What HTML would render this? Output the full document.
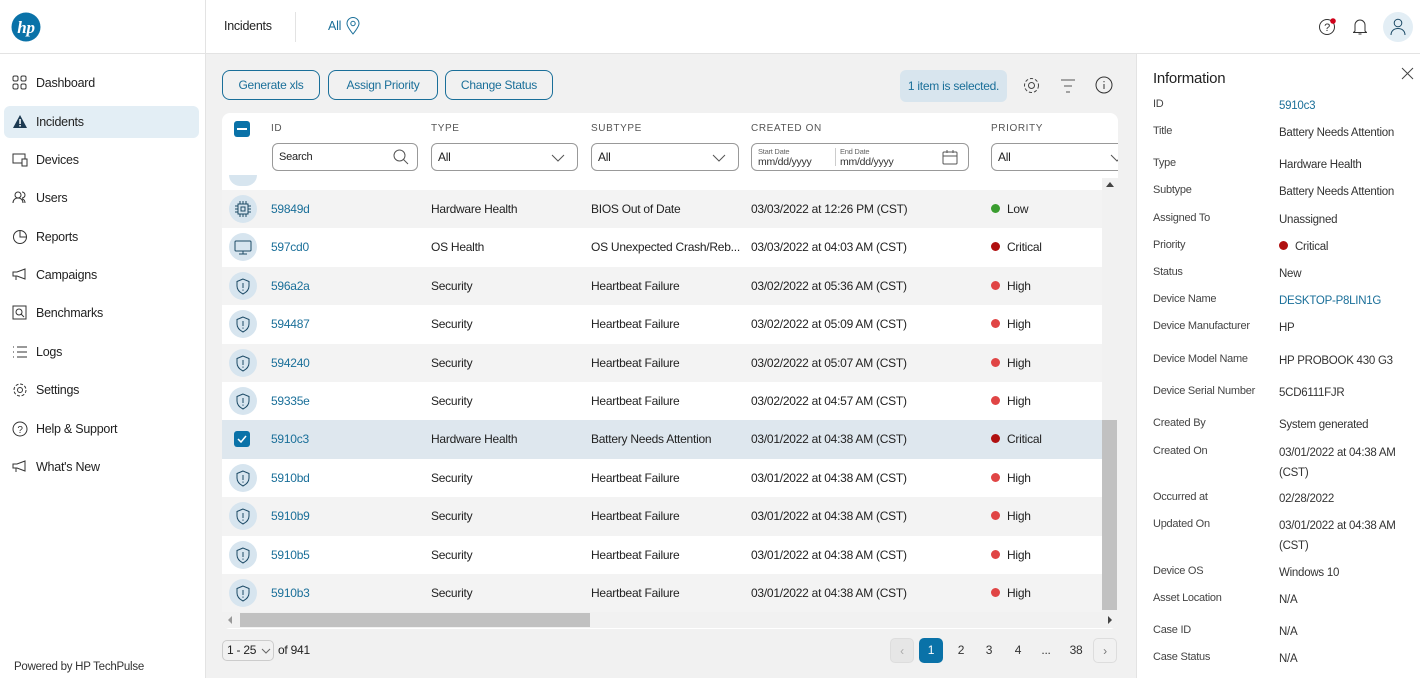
<!DOCTYPE html>
<html><head><meta charset="utf-8"><style>
*{box-sizing:border-box;margin:0;padding:0}
body{width:1420px;height:678px;overflow:hidden;font-family:"Liberation Sans",sans-serif;font-size:12px;letter-spacing:-0.25px;color:#222;background:#f1f1f1;position:relative}
.a{position:absolute}
.side{left:0;top:0;width:206px;height:678px;background:#fff;border-right:1px solid #e3e3e3}
.top{left:206px;top:0;width:1214px;height:54px;background:#fff;border-bottom:1px solid #e3e3e3}
.nav{position:absolute;left:12px;font-size:12.5px;color:#222;line-height:20px}
.nav svg{position:absolute;left:0;top:2px}
.nav span{position:absolute;left:24px;white-space:nowrap}
.btn{position:absolute;top:70px;height:30px;border:1px solid #1a6f99;border-radius:8px;color:#1a6f99;font-size:12px;text-align:center;line-height:28px;white-space:nowrap}
.card{left:222px;top:113px;width:896px;height:516px;background:#fff;border-radius:8px;overflow:hidden}
.hl{position:absolute;top:10px;font-size:10px;letter-spacing:.6px;color:#555}
.inp{position:absolute;top:30px;height:28px;border:1px solid #999;border-radius:6px;font-size:12px;padding-left:6px;line-height:26px;background:#fff}
.row{position:absolute;left:0;width:880px;height:38.4px;font-size:12px}
.row div{position:absolute;top:12px;white-space:nowrap}
.ic{left:7px!important;top:5px!important;width:28px;height:28px;border-radius:50%;background:#d7e5ef}
.id{left:49px;color:#1a6f99}
.c2{left:209px}.c3{left:369px}.c4{left:529px}.c5{left:769px}
.dot{display:inline-block;width:9px;height:9px;border-radius:50%;margin-right:7px;vertical-align:0}
.g{background:#f3f3f3}.w{background:#fff}.s{background:#dee7ee}
.info{left:1136px;top:54px;width:284px;height:624px;background:#fff;border-left:1px solid #e3e3e3}
.l{position:absolute;left:16px;font-size:11px;color:#444}
.v{position:absolute;left:142px;font-size:11.5px;color:#333;line-height:20px;width:122px}
.pg{position:absolute;top:638px;height:25px;width:24px;text-align:center;line-height:25px;font-size:12px;color:#333}
</style></head><body>
<div class="a side">
<svg class="a" style="left:11px;top:12px" width="30" height="30" viewBox="0 0 30 30"><circle cx="15" cy="15" r="14.5" fill="#0a72a8"/><text x="15" y="21" text-anchor="middle" font-family="Liberation Serif" font-style="italic" font-weight="bold" font-size="17" fill="#fff">hp</text></svg>
<div class="a" style="left:0;top:53px;width:205px;border-top:1px solid #e3e3e3"></div>
<div class="a" style="left:4px;top:106px;width:195px;height:32px;background:#e3eef5;border-radius:6px"></div>
<div class="nav" style="top:73px"><svg width="15" height="15" fill="none" stroke="#333"><rect x="1" y="1" width="5" height="5" rx="1.5"/><rect x="9" y="1" width="5" height="5" rx="1.5"/><rect x="1" y="9" width="5" height="5" rx="1.5"/><rect x="9" y="9" width="5" height="5" rx="1.5"/></svg><span>Dashboard</span></div>
<div class="nav" style="top:112px"><svg width="16" height="15"><path d="M8 1 L15 14 H1Z" fill="#1c3a52"/><rect x="7.3" y="5" width="1.5" height="5" fill="#fff"/><rect x="7.3" y="11" width="1.5" height="1.5" fill="#fff"/></svg><span>Incidents</span></div>
<div class="nav" style="top:150px"><svg width="16" height="15" fill="none" stroke="#333"><rect x="1" y="2" width="12" height="9"/><rect x="10" y="7" width="5" height="7" fill="#fff"/></svg><span>Devices</span></div>
<div class="nav" style="top:188px"><svg width="16" height="15" fill="none" stroke="#333"><circle cx="6" cy="5" r="3"/><path d="M1 13c0-3 2-5 5-5s5 2 5 5M10 2a3 3 0 010 6M13 13c0-2-1-4-3-4"/></svg><span>Users</span></div>
<div class="nav" style="top:227px"><svg width="16" height="16" fill="none" stroke="#333"><circle cx="8" cy="8" r="6.5"/><path d="M8 1.5V8H14.5"/></svg><span>Reports</span></div>
<div class="nav" style="top:265px"><svg width="16" height="15" fill="none" stroke="#333"><path d="M1 5h4l8-3v10l-8-3H1zM4 9v4"/></svg><span>Campaigns</span></div>
<div class="nav" style="top:303px"><svg width="16" height="16" fill="none" stroke="#333"><rect x="1" y="1" width="13" height="13"/><circle cx="7" cy="7" r="3"/><path d="M9 9l3 3"/></svg><span>Benchmarks</span></div>
<div class="nav" style="top:342px"><svg width="16" height="15" fill="none" stroke="#333"><path d="M1 3h1M5 3h10M1 8h1M5 8h10M1 13h1M5 13h10"/></svg><span>Logs</span></div>
<div class="nav" style="top:380px"><svg width="16" height="16" fill="none" stroke="#333"><circle cx="8" cy="8" r="2.5"/><circle cx="8" cy="8" r="6" stroke-dasharray="3 1.7"/></svg><span>Settings</span></div>
<div class="nav" style="top:419px"><svg width="16" height="16" fill="none" stroke="#333"><circle cx="8" cy="8" r="7"/><text x="8" y="12" text-anchor="middle" font-size="10" fill="#333" stroke="none">?</text></svg><span>Help &amp; Support</span></div>
<div class="nav" style="top:457px"><svg width="16" height="15" fill="none" stroke="#333"><path d="M1 5h4l8-3v10l-8-3H1zM4 9v4"/></svg><span>What's New</span></div>
<div class="a" style="left:14px;top:661px;font-size:11.5px;color:#333">Powered by HP TechPulse</div>
</div>
<div class="a top">
<div class="a" style="left:18px;top:19px;font-size:12.5px">Incidents</div>
<div class="a" style="left:89px;top:12px;height:30px;border-left:1px solid #e3e3e3"></div>
<div class="a" style="left:122px;top:19px;font-size:12.5px;color:#1a6f99">All</div>
<svg class="a" style="left:140px;top:17px" width="14" height="18" fill="none" stroke="#1a6f99"><path d="M7 17C3 12 1 9 1 6.5a6 6 0 0112 0C13 9 11 12 7 17z"/><circle cx="7" cy="6.5" r="2.2"/></svg>
<svg class="a" style="left:1112px;top:17px" width="20" height="20" fill="none" stroke="#333"><circle cx="9" cy="10" r="7.5"/><text x="9" y="14" text-anchor="middle" font-size="11" fill="#333" stroke="none">?</text><circle cx="15" cy="4" r="2.8" fill="#d0021b" stroke="none"/></svg>
<svg class="a" style="left:1147px;top:17px" width="14" height="19" fill="none" stroke="#333"><path d="M2 14V8a5 5 0 0110 0v6l1.5 1.5h-13zM5.5 17h3"/></svg>
<div class="a" style="left:1177px;top:12px;width:30px;height:30px;border-radius:50%;background:#e3eef5"></div>
<svg class="a" style="left:1183px;top:17px" width="18" height="20" fill="none" stroke="#1c4a66"><circle cx="9" cy="6" r="3.8"/><path d="M2 18c0-4 3-6.5 7-6.5s7 2.5 7 6.5"/></svg>
</div>
<div class="btn" style="left:222px;width:98px">Generate xls</div>
<div class="btn" style="left:328px;width:110px">Assign Priority</div>
<div class="btn" style="left:445px;width:108px">Change Status</div>
<div class="a" style="left:900px;top:70px;width:107px;height:32px;background:#d8e5ee;border-radius:6px;color:#1a6f99;font-size:12px;line-height:32px;text-align:center;white-space:nowrap">1 item is selected.</div>
<svg class="a" style="left:1022px;top:76px" width="19" height="19" fill="none" stroke="#444"><circle cx="9.5" cy="9.5" r="3"/><circle cx="9.5" cy="9.5" r="7" stroke-dasharray="3.2 2"/></svg>
<svg class="a" style="left:1060px;top:78px" width="16" height="16" stroke="#555"><path d="M1 2h14M4 8h8M6 14h4"/></svg>
<svg class="a" style="left:1095px;top:76px" width="18" height="18" fill="none" stroke="#333"><circle cx="9" cy="9" r="8"/><path d="M9 8v5M9 5v1.3"/></svg>
<div class="a card">
<div class="a" style="left:12px;top:8px;width:16px;height:16px;background:#0a72a8;border-radius:3px"><div class="a" style="left:3px;top:7px;width:10px;height:2px;background:#fff"></div></div>
<div class="hl" style="left:49px">ID</div><div class="hl" style="left:209px">TYPE</div><div class="hl" style="left:369px">SUBTYPE</div><div class="hl" style="left:529px">CREATED ON</div><div class="hl" style="left:769px">PRIORITY</div>
<div class="inp" style="left:50px;width:146px;font-size:11px">Search<svg class="a" style="right:8px;top:5px" width="16" height="16" fill="none" stroke="#555"><circle cx="6.5" cy="6.5" r="5.5"/><path d="M10.5 10.5l4.5 4.5"/></svg></div>
<div class="inp" style="left:209px;width:147px">All<svg class="a" style="right:12px;top:10px" width="14" height="8" fill="none" stroke="#555"><path d="M1 1l6 6 6-6"/></svg></div>
<div class="inp" style="left:369px;width:148px">All<svg class="a" style="right:12px;top:10px" width="14" height="8" fill="none" stroke="#555"><path d="M1 1l6 6 6-6"/></svg></div>
<div class="inp" style="left:529px;width:218px;line-height:11px;font-size:7.5px;color:#666;padding-top:2px">Start Date<br><span style="font-size:10.5px;color:#333">mm/dd/yyyy</span><div class="a" style="left:88px;top:2px;font-size:7.5px">End Date<br><span style="font-size:10.5px;color:#333">mm/dd/yyyy</span></div><div class="a" style="left:83px;top:4px;height:18px;border-left:1px solid #ccc"></div><svg class="a" style="right:10px;top:6px" width="16" height="15" fill="none" stroke="#555"><rect x="1" y="2" width="14" height="12" rx="1"/><path d="M1 6h14M5 0v3M11 0v3"/></svg></div>
<div class="inp" style="left:769px;width:140px">All<svg class="a" style="left:118px;top:10px" width="14" height="8" fill="none" stroke="#555"><path d="M1 1l6 6 6-6"/></svg></div>
<div class="a" style="left:7px;top:62px;width:28px;height:11px;border-radius:0 0 14px 14px;background:#d7e5ef"></div>

<div class="row g" style="top:77px"><div class="ic"></div><svg class="a" style="left:13px;top:11px" width="16" height="16" fill="none" stroke="#1c4a66"><rect x="3" y="3" width="10" height="10"/><rect x="6" y="6" width="4" height="4"/><path d="M5 0v3M8 0v3M11 0v3M5 13v3M8 13v3M11 13v3M0 5h3M0 8h3M0 11h3M13 5h3M13 8h3M13 11h3"/></svg><div class="id">59849d</div><div class="c2">Hardware Health</div><div class="c3">BIOS Out of Date</div><div class="c4">03/03/2022 at 12:26 PM (CST)</div><div class="c5"><span class="dot" style="background:#3a9d2f"></span>Low</div></div>
<div class="row w" style="top:115.4px"><div class="ic"></div><svg class="a" style="left:12px;top:12px" width="18" height="15" fill="none" stroke="#1c4a66"><rect x="1" y="1" width="16" height="10" rx="1"/><path d="M9 11v3M5 14h8"/></svg><div class="id">597cd0</div><div class="c2">OS Health</div><div class="c3">OS Unexpected Crash/Reb...</div><div class="c4">03/03/2022 at 04:03 AM (CST)</div><div class="c5"><span class="dot" style="background:#b01010"></span>Critical</div></div>
<div class="row g" style="top:153.8px"><div class="ic"></div><svg class="a" style="left:14px;top:11px" width="14" height="17" fill="none" stroke="#1c4a66"><path d="M7 1L1 3.5V8c0 4 3 6.5 6 8 3-1.5 6-4 6-8V3.5z"/><path d="M7 5v5M7 11.5v1.3"/></svg><div class="id">596a2a</div><div class="c2">Security</div><div class="c3">Heartbeat Failure</div><div class="c4">03/02/2022 at 05:36 AM (CST)</div><div class="c5"><span class="dot" style="background:#e04545"></span>High</div></div>
<div class="row w" style="top:192.2px"><div class="ic"></div><svg class="a" style="left:14px;top:11px" width="14" height="17" fill="none" stroke="#1c4a66"><path d="M7 1L1 3.5V8c0 4 3 6.5 6 8 3-1.5 6-4 6-8V3.5z"/><path d="M7 5v5M7 11.5v1.3"/></svg><div class="id">594487</div><div class="c2">Security</div><div class="c3">Heartbeat Failure</div><div class="c4">03/02/2022 at 05:09 AM (CST)</div><div class="c5"><span class="dot" style="background:#e04545"></span>High</div></div>
<div class="row g" style="top:230.6px"><div class="ic"></div><svg class="a" style="left:14px;top:11px" width="14" height="17" fill="none" stroke="#1c4a66"><path d="M7 1L1 3.5V8c0 4 3 6.5 6 8 3-1.5 6-4 6-8V3.5z"/><path d="M7 5v5M7 11.5v1.3"/></svg><div class="id">594240</div><div class="c2">Security</div><div class="c3">Heartbeat Failure</div><div class="c4">03/02/2022 at 05:07 AM (CST)</div><div class="c5"><span class="dot" style="background:#e04545"></span>High</div></div>
<div class="row w" style="top:269px"><div class="ic"></div><svg class="a" style="left:14px;top:11px" width="14" height="17" fill="none" stroke="#1c4a66"><path d="M7 1L1 3.5V8c0 4 3 6.5 6 8 3-1.5 6-4 6-8V3.5z"/><path d="M7 5v5M7 11.5v1.3"/></svg><div class="id">59335e</div><div class="c2">Security</div><div class="c3">Heartbeat Failure</div><div class="c4">03/02/2022 at 04:57 AM (CST)</div><div class="c5"><span class="dot" style="background:#e04545"></span>High</div></div>
<div class="row s" style="top:307.4px"><div class="a" style="left:12px!important;top:11px!important;width:16px;height:16px;background:#0a72a8;border-radius:3px"></div><svg class="a" style="left:15px;top:15px" width="10" height="8" fill="none" stroke="#fff" stroke-width="1.5"><path d="M1 4l3 3 5-6"/></svg><div class="id">5910c3</div><div class="c2">Hardware Health</div><div class="c3">Battery Needs Attention</div><div class="c4">03/01/2022 at 04:38 AM (CST)</div><div class="c5"><span class="dot" style="background:#b01010"></span>Critical</div></div>
<div class="row w" style="top:345.8px"><div class="ic"></div><svg class="a" style="left:14px;top:11px" width="14" height="17" fill="none" stroke="#1c4a66"><path d="M7 1L1 3.5V8c0 4 3 6.5 6 8 3-1.5 6-4 6-8V3.5z"/><path d="M7 5v5M7 11.5v1.3"/></svg><div class="id">5910bd</div><div class="c2">Security</div><div class="c3">Heartbeat Failure</div><div class="c4">03/01/2022 at 04:38 AM (CST)</div><div class="c5"><span class="dot" style="background:#e04545"></span>High</div></div>
<div class="row g" style="top:384.2px"><div class="ic"></div><svg class="a" style="left:14px;top:11px" width="14" height="17" fill="none" stroke="#1c4a66"><path d="M7 1L1 3.5V8c0 4 3 6.5 6 8 3-1.5 6-4 6-8V3.5z"/><path d="M7 5v5M7 11.5v1.3"/></svg><div class="id">5910b9</div><div class="c2">Security</div><div class="c3">Heartbeat Failure</div><div class="c4">03/01/2022 at 04:38 AM (CST)</div><div class="c5"><span class="dot" style="background:#e04545"></span>High</div></div>
<div class="row w" style="top:422.6px"><div class="ic"></div><svg class="a" style="left:14px;top:11px" width="14" height="17" fill="none" stroke="#1c4a66"><path d="M7 1L1 3.5V8c0 4 3 6.5 6 8 3-1.5 6-4 6-8V3.5z"/><path d="M7 5v5M7 11.5v1.3"/></svg><div class="id">5910b5</div><div class="c2">Security</div><div class="c3">Heartbeat Failure</div><div class="c4">03/01/2022 at 04:38 AM (CST)</div><div class="c5"><span class="dot" style="background:#e04545"></span>High</div></div>
<div class="row g" style="top:461px"><div class="ic"></div><svg class="a" style="left:14px;top:11px" width="14" height="17" fill="none" stroke="#1c4a66"><path d="M7 1L1 3.5V8c0 4 3 6.5 6 8 3-1.5 6-4 6-8V3.5z"/><path d="M7 5v5M7 11.5v1.3"/></svg><div class="id">5910b3</div><div class="c2">Security</div><div class="c3">Heartbeat Failure</div><div class="c4">03/01/2022 at 04:38 AM (CST)</div><div class="c5"><span class="dot" style="background:#e04545"></span>High</div></div>

<div class="a" style="left:880px;top:65px;width:16px;height:434px;background:#f1f1f1"></div>
<div class="a" style="left:884px;top:69px;width:0;height:0;border:4px solid transparent;border-bottom:5px solid #444;border-top:0"></div>
<div class="a" style="left:880px;top:307px;width:15px;height:190px;background:#c1c1c1"></div>
<div class="a" style="left:0;top:499px;width:896px;height:16px;background:#f1f1f1"></div>
<div class="a" style="left:18px;top:500px;width:350px;height:14px;background:#c1c1c1"></div>
<div class="a" style="left:6px;top:503px;border:4px solid transparent;border-right:4px solid #999;border-left:0"></div>
<div class="a" style="left:886px;top:503px;border:4px solid transparent;border-left:4px solid #444;border-right:0"></div>
</div>
<div class="a" style="left:222px;top:640px;width:52px;height:21px;border:1px solid #ccc;border-radius:5px;font-size:12px;line-height:19px;padding-left:4px">1 - 25<svg class="a" style="left:38px;top:7px" width="10" height="6" fill="none" stroke="#666"><path d="M1 1l4 4 4-4"/></svg></div>
<div class="a" style="left:278px;top:643px;font-size:12px">of 941</div>
<div class="pg" style="left:890px;background:#e6e6e6;border:1px solid #ddd;border-radius:5px;color:#aaa">‹</div>
<div class="pg" style="left:919px;background:#0a72a8;color:#fff;border-radius:5px">1</div>
<div class="pg" style="left:949px">2</div><div class="pg" style="left:977px">3</div><div class="pg" style="left:1006px">4</div><div class="pg" style="left:1034px">...</div><div class="pg" style="left:1064px">38</div>
<div class="pg" style="left:1093px;border:1px solid #ddd;border-radius:5px;color:#777">›</div>
<div class="a info">
<div class="a" style="left:16px;top:16px;font-size:15px;color:#222">Information</div>
<svg class="a" style="left:264px;top:13px" width="13" height="13" stroke="#444"><path d="M1 1l11 11M12 1L1 12"/></svg>
<div class="l" style="top:44px">ID</div><div class="v" style="top:42px;color:#1a6f99">5910c3</div>
<div class="l" style="top:71px">Title</div><div class="v" style="top:69px">Battery Needs Attention</div>
<div class="l" style="top:103px">Type</div><div class="v" style="top:101px">Hardware Health</div>
<div class="l" style="top:130px">Subtype</div><div class="v" style="top:128px">Battery Needs Attention</div>
<div class="l" style="top:158px">Assigned To</div><div class="v" style="top:156px">Unassigned</div>
<div class="l" style="top:185px">Priority</div><div class="v" style="top:183px"><span class="dot" style="background:#b01010"></span>Critical</div>
<div class="l" style="top:212px">Status</div><div class="v" style="top:210px">New</div>
<div class="l" style="top:239px">Device Name</div><div class="v" style="top:237px;color:#1a6f99">DESKTOP-P8LIN1G</div>
<div class="l" style="top:266px">Device Manufacturer</div><div class="v" style="top:264px">HP</div>
<div class="l" style="top:299px">Device Model Name</div><div class="v" style="top:297px">HP PROBOOK 430 G3</div>
<div class="l" style="top:331px">Device Serial Number</div><div class="v" style="top:329px">5CD6111FJR</div>
<div class="l" style="top:363px">Created By</div><div class="v" style="top:361px">System generated</div>
<div class="l" style="top:391px">Created On</div><div class="v" style="top:389px">03/01/2022 at 04:38 AM (CST)</div>
<div class="l" style="top:437px">Occurred at</div><div class="v" style="top:435px">02/28/2022</div>
<div class="l" style="top:464px">Updated On</div><div class="v" style="top:462px">03/01/2022 at 04:38 AM (CST)</div>
<div class="l" style="top:511px">Device OS</div><div class="v" style="top:509px">Windows 10</div>
<div class="l" style="top:538px">Asset Location</div><div class="v" style="top:536px">N/A</div>
<div class="l" style="top:570px">Case ID</div><div class="v" style="top:568px">N/A</div>
<div class="l" style="top:597px">Case Status</div><div class="v" style="top:595px">N/A</div>
</div>
</body></html>
